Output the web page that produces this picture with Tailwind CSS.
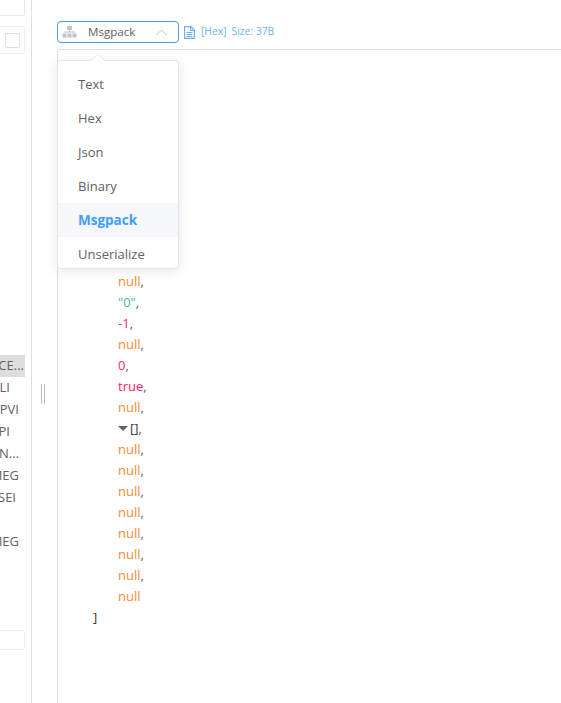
<!DOCTYPE html>
<html><head><meta charset="utf-8"><script src="https://cdn.jsdelivr.net/npm/@tailwindcss/browser@4"></script></head>
<body class="bg-white overflow-hidden">
<div class="relative flex w-[561px] h-[703px] overflow-hidden font-['Open_Sans','Noto_Sans',sans-serif] text-[#606266]">
  <aside class="w-[32px] h-full shrink-0 border-r border-[#dcdfe6] flex flex-col pr-[6px]">
    <div class="h-[16px] -ml-4 border border-t-0 border-[#e4e7ed] rounded-b-[3px]"></div>
    <div class="mt-[10px] h-[28px] -ml-4 border border-[#ebeef5] rounded-[3px] flex items-center justify-end pr-[4px]">
      <span class="w-[15px] h-[15px] border border-[#dcdfe6] rounded-[2px]"></span>
    </div>
    <div class="mt-[301px] flex flex-col text-[13px] leading-[20px] text-[#606266]">
      <div class="h-[22px] bg-[#dddddd] flex justify-end overflow-hidden whitespace-nowrap pr-[1px]">CE...</div>
      <div class="h-[22px] flex justify-end overflow-hidden whitespace-nowrap pr-[15px]">LI</div>
      <div class="h-[22px] flex justify-end overflow-hidden whitespace-nowrap pr-[6px]">PVI</div>
      <div class="h-[22px] flex justify-end overflow-hidden whitespace-nowrap pr-[15px]">PI</div>
      <div class="h-[22px] flex justify-end overflow-hidden whitespace-nowrap pr-[6px]">N...</div>
      <div class="h-[22px] flex justify-end overflow-hidden whitespace-nowrap pr-[6px]">MEG</div>
      <div class="h-[22px] flex justify-end overflow-hidden whitespace-nowrap pr-[9px]">SEI</div>
      <div class="h-[22px]"></div>
      <div class="h-[22px] flex justify-end overflow-hidden whitespace-nowrap pr-[6px]">MEG</div>
    </div>
    <div class="mt-[77px] h-[20px] -ml-4 border border-[#ebeef5] rounded-[3px]"></div>
  </aside>
  <div class="absolute left-[41px] top-[384px] w-[4px] h-[20px] border-x border-[#bbbbbb]"></div>
  <main class="ml-[25px] flex-1 flex flex-col pt-[21px] min-w-0">
    <div class="flex items-center h-[22px] text-[10.3px] text-[#6eb2f5]">
      <div class="w-[122px] h-[22px] shrink-0 border border-[#409eff] rounded-[4px] flex items-center pl-[4px] pr-[11px]">
        <svg width="15" height="12" viewBox="0 0 15 12" fill="#c0c4cc"><rect x="5" y="0" width="5" height="4"/><rect x="7" y="4" width="1" height="2"/><rect x="2" y="5.5" width="11" height="1"/><rect x="0.5" y="7.5" width="4" height="4"/><rect x="5.5" y="7.5" width="4" height="4"/><rect x="10.5" y="7.5" width="4" height="4"/></svg>
        <span class="ml-[11px] text-[11.6px] leading-[20px] text-[#606266]">Msgpack</span>
        <svg class="ml-auto" width="11" height="7" viewBox="0 0 11 7" fill="none" stroke="#c0c4cc" stroke-width="1"><path d="M0.5 6 L5.5 1 L10.5 6"/></svg>
      </div>
      <svg class="ml-[5px]" width="11" height="13" viewBox="0 0 11 13" fill="none" stroke="#6eb2f5" stroke-width="1.2"><path d="M0.6 0.6 H7 L10.4 4 V12.4 H0.6 Z"/><path d="M6.6 0.6 V4.4 H10.4"/><path d="M2.5 6.5 H8.5 M2.5 8.5 H8.5 M2.5 10.5 H8.5"/></svg>
      <span class="ml-[6px]">[Hex]</span><span class="ml-[5px]">Size: 37B</span>
    </div>
    <div class="mt-[6px] flex-1 border-l border-t border-[#dcdfe6] rounded-tl-[3px] text-[13px] leading-[21px]">
      <div class="pt-[221px] pl-[60px]">
        <div class="text-[#ec8f3a]">null<span class="text-[#606266]">,</span></div>
        <div class="text-[#42b983]">"0"<span class="text-[#606266]">,</span></div>
        <div class="text-[#fc1e70]">-1<span class="text-[#606266]">,</span></div>
        <div class="text-[#ec8f3a]">null<span class="text-[#606266]">,</span></div>
        <div class="text-[#fc1e70]">0<span class="text-[#606266]">,</span></div>
        <div class="text-[#fc1e70]">true<span class="text-[#606266]">,</span></div>
        <div class="text-[#ec8f3a]">null<span class="text-[#606266]">,</span></div>
        <div class="flex items-center text-[#333333]"><span class="w-0 h-0 border-x-[5px] border-x-transparent border-t-[5px] border-t-[#606266] mr-[2px]"></span><span>[]<span class="text-[#606266]">,</span></span></div>
        <div class="text-[#ec8f3a]">null<span class="text-[#606266]">,</span></div>
        <div class="text-[#ec8f3a]">null<span class="text-[#606266]">,</span></div>
        <div class="text-[#ec8f3a]">null<span class="text-[#606266]">,</span></div>
        <div class="text-[#ec8f3a]">null<span class="text-[#606266]">,</span></div>
        <div class="text-[#ec8f3a]">null<span class="text-[#606266]">,</span></div>
        <div class="text-[#ec8f3a]">null<span class="text-[#606266]">,</span></div>
        <div class="text-[#ec8f3a]">null<span class="text-[#606266]">,</span></div>
        <div class="text-[#ec8f3a]">null</div>
        <div class="-ml-[25px] text-[#333333]">]</div>
      </div>
    </div>
  </main>
  <div class="absolute left-[57px] top-[60px] w-[122px] h-[209px] bg-white border border-[#e4e7ed] rounded-[4px] shadow-[0_2px_12px_rgba(0,0,0,0.1)] py-[6px] text-[13px]">
    <div class="absolute -top-[6px] left-[35px] w-[10px] h-[10px] bg-white rotate-45 border-l border-t border-[#ebeef5]"></div>
    <div class="relative h-[34px] pl-[20px] leading-[34px]">Text</div>
    <div class="relative h-[34px] pl-[20px] leading-[34px]">Hex</div>
    <div class="relative h-[34px] pl-[20px] leading-[34px]">Json</div>
    <div class="relative h-[34px] pl-[20px] leading-[34px]">Binary</div>
    <div class="relative h-[34px] pl-[20px] leading-[34px] bg-[#f5f7fa] text-[#409eff] font-bold text-[13.5px]">Msgpack</div>
    <div class="relative h-[34px] pl-[20px] leading-[34px]">Unserialize</div>
  </div>
</div>
</body></html>
